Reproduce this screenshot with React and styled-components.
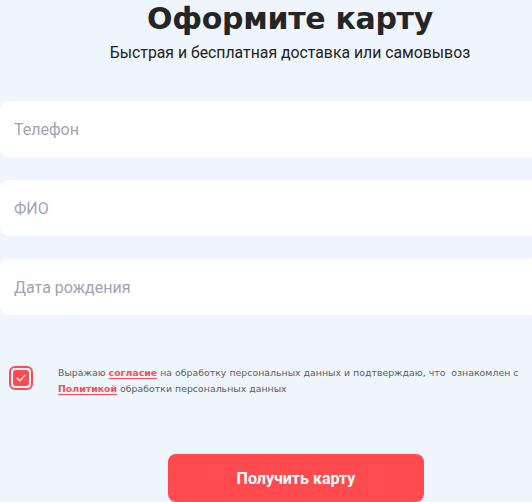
import React, { useState } from 'react';
import styled, { createGlobalStyle } from 'styled-components';

const GlobalStyle = createGlobalStyle`
  html, body {
    margin: 0;
    padding: 0;
    background: #eef5fc;
    overflow: hidden;
  }
  * { box-sizing: border-box; }
`;

const Page = styled.div`
  width: 580px;
  font-family: Roboto, "Liberation Sans", sans-serif;
`;

const Title = styled.h1`
  margin: 0;
  padding-top: 2px;
  font-family: "DejaVu Sans", sans-serif;
  font-weight: 700;
  font-size: 30px;
  line-height: 34px;
  letter-spacing: -0.3px;
  color: #252525;
  text-align: center;
`;

const Subtitle = styled.p`
  margin: 7px 0 0;
  font-size: 15.8px;
  line-height: 20px;
  color: #222;
  text-align: center;
`;

const Form = styled.form`
  display: flex;
  flex-direction: column;
  margin-top: 38px;
`;

const Fields = styled.div`
  display: flex;
  flex-direction: column;
  gap: 23px;
`;

const Field = styled.input`
  width: 100%;
  height: 56px;
  border: none;
  border-radius: 9px;
  background: #fff;
  padding: 0 14px;
  font-family: Roboto, "Liberation Sans", sans-serif;
  font-size: 16px;
  color: #222;
  outline: none;

  &::placeholder {
    color: #a3a3b1;
  }
`;

const Consent = styled.label`
  display: flex;
  align-items: flex-start;
  gap: 25px;
  margin-top: 50px;
  padding-left: 9px;
  cursor: pointer;
`;

const Box = styled.span`
  flex: none;
  width: 24px;
  height: 24px;
  margin-top: 1px;
  border: 2px solid #ff4b4f;
  border-radius: 6px;
  padding: 2px;
  display: flex;

  input { display: none; }
`;

const BoxInner = styled.span`
  flex: 1;
  border-radius: 3px;
  background: ${p => (p.$on ? '#ff4b4f' : 'transparent')};
  display: flex;
  align-items: center;
  justify-content: center;
`;

const ConsentText = styled.span`
  width: 470px;
  font-family: "DejaVu Sans", Verdana, sans-serif;
  font-size: 9.4px;
  line-height: 16px;
  color: #606060;
`;

const Link = styled.a`
  color: #ff4b4f;
  font-weight: 700;
  text-decoration: underline;
  text-underline-offset: 2px;
`;

const Submit = styled.button`
  align-self: flex-start;
  margin: 57px 0 0 168px;
  width: 256px;
  height: 48px;
  border: none;
  border-radius: 8px;
  background: #ff4b4f;
  color: #fff;
  font-family: Roboto, "Liberation Sans", sans-serif;
  font-weight: 700;
  font-size: 16px;
  cursor: pointer;
`;

export default function App() {
  const [agreed, setAgreed] = useState(true);

  return (
    <Page>
      <GlobalStyle />
      <Title>Оформите карту</Title>
      <Subtitle>Быстрая и бесплатная доставка или самовывоз</Subtitle>
      <Form onSubmit={e => e.preventDefault()}>
        <Fields>
          <Field type="tel" placeholder="Телефон" />
          <Field type="text" placeholder="ФИО" />
          <Field type="text" placeholder="Дата рождения" />
        </Fields>
        <Consent>
          <Box>
            <input type="checkbox" checked={agreed} onChange={() => setAgreed(!agreed)} />
            <BoxInner $on={agreed}>
              {agreed && (
                <svg width="10" height="8" viewBox="0 0 10 8">
                  <path d="M1 4.2 L3.8 6.8 L9 1.2" fill="none" stroke="#fff" strokeWidth="1.2" strokeLinecap="round" strokeLinejoin="round" />
                </svg>
              )}
            </BoxInner>
          </Box>
          <ConsentText>
            Выражаю <Link href="#">согласие</Link> на обработку персональных данных и подтверждаю, что&nbsp; ознакомлен с{' '}
            <Link href="#">Политикой</Link> обработки персональных данных
          </ConsentText>
        </Consent>
        <Submit type="submit">Получить карту</Submit>
      </Form>
    </Page>
  );
}
